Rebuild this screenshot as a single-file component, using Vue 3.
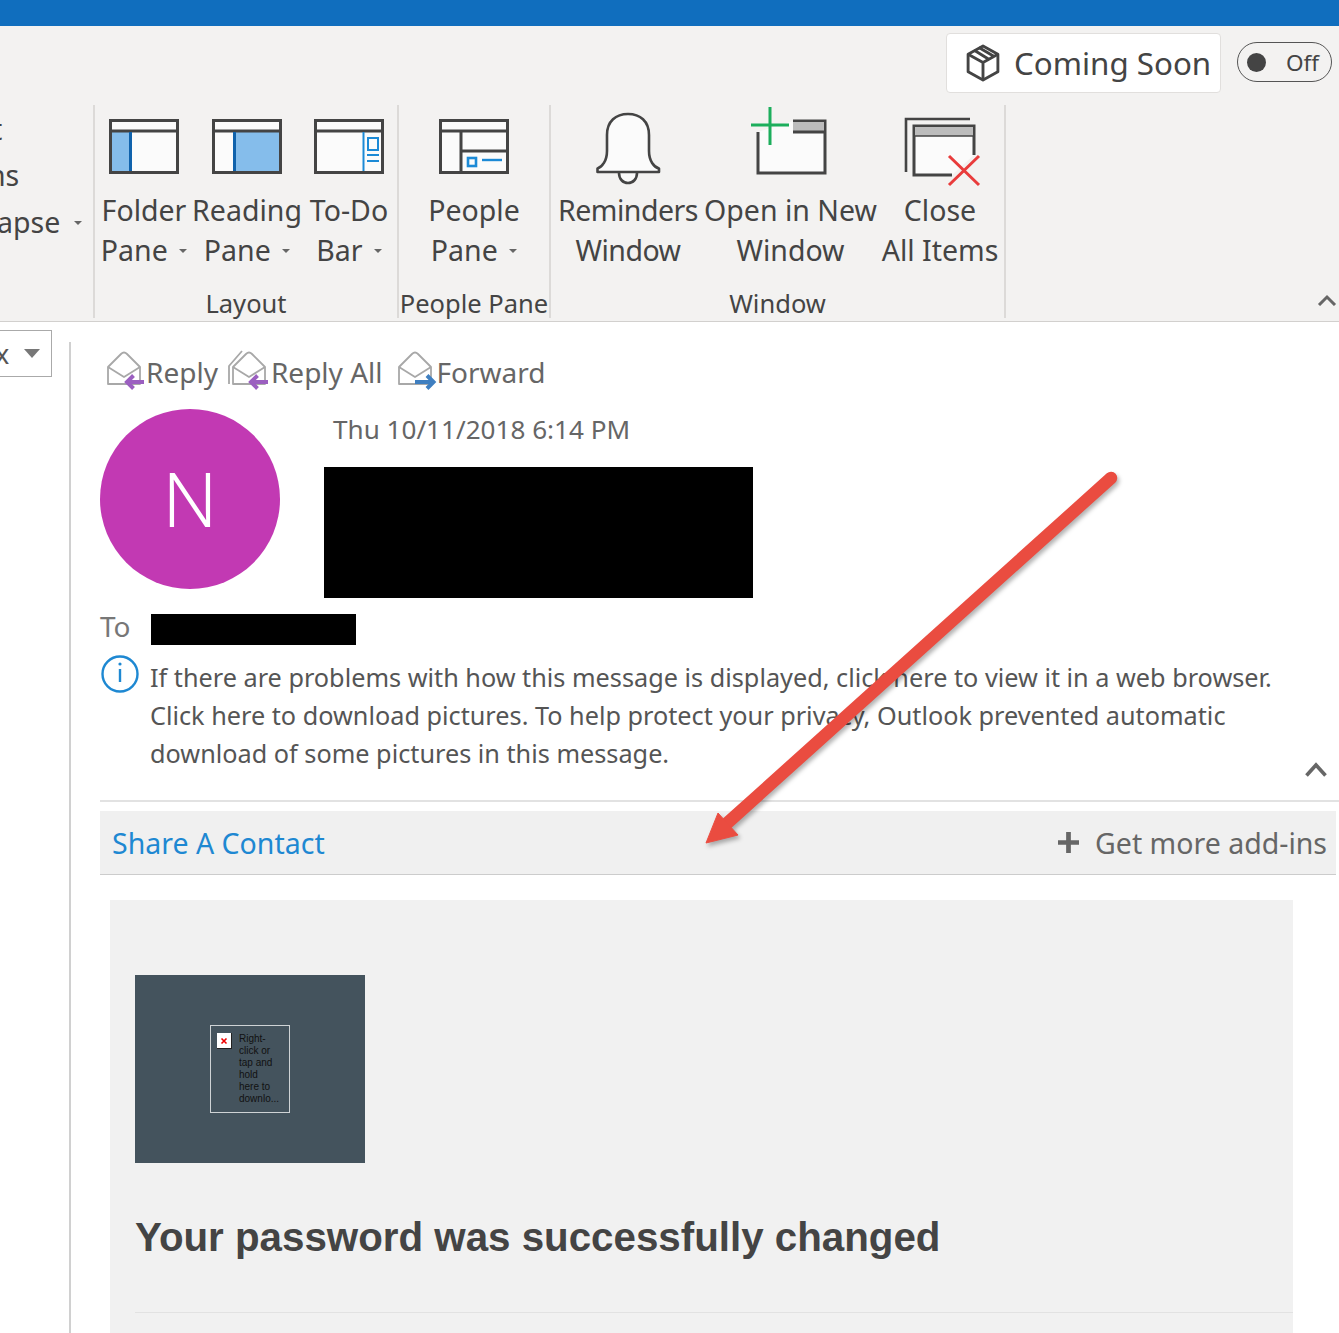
<script setup>
// Outlook reading view: ribbon on top, message below it.
const replyActions = [
  { label: 'Reply', arrow: '#9b5fc0', back: true, all: false },
  { label: 'Reply All', arrow: '#9b5fc0', back: true, all: true },
  { label: 'Forward', arrow: '#3f7fc0', back: false, all: false },
]
</script>

<template>
  <div class="app">
    <div class="titlebar"></div>

    <header class="ribbon">
      <div class="ribbon-top">
        <div class="coming-soon">
          <svg class="cube" viewBox="0 0 33 37" fill="none" stroke="#444" stroke-width="2.8" stroke-linejoin="round">
            <path d="M16.5 2 L31 10 V27 L16.5 35 L2 27 V10 Z" />
            <path d="M2 10 L16.5 18 L31 10 M16.5 18 V35 M8 6 L22.5 15 M12.5 3.5 L27 12" />
          </svg>
          <span>Coming Soon</span>
        </div>
        <div class="toggle"><i></i><span>Off</span></div>
      </div>

      <div class="groups">
        <div class="group stub">
          <div class="stub-line first">t</div>
          <div class="stub-line second">ns</div>
          <div class="stub-line third">apse <b class="caret stub-caret"></b></div>
        </div>

        <section class="group layout">
          <div class="buttons">
            <div class="rbtn folder-btn">
              <svg class="ico" viewBox="0 0 80 76">
                <rect x="6.5" y="15.5" width="67" height="52" fill="#fbfbfb" stroke="#444" stroke-width="3" />
                <rect x="8" y="27" width="17" height="39" fill="#85bdeb" />
                <path d="M5 26H75" stroke="#444" stroke-width="3" />
                <path d="M26.5 27V66" stroke="#0f62ac" stroke-width="3" />
              </svg>
              <div class="lbl">Folder<br />Pane <b class="caret"></b></div>
            </div>
            <div class="rbtn reading-btn">
              <svg class="ico" viewBox="0 0 80 76">
                <rect x="6.5" y="15.5" width="67" height="52" fill="#fbfbfb" stroke="#444" stroke-width="3" />
                <rect x="28" y="27" width="44" height="39" fill="#85bdeb" />
                <path d="M5 26H75" stroke="#444" stroke-width="3" />
                <path d="M27.5 27V66" stroke="#0f62ac" stroke-width="3" />
              </svg>
              <div class="lbl">Reading<br />Pane <b class="caret"></b></div>
            </div>
            <div class="rbtn todo-btn">
              <svg class="ico" viewBox="0 0 80 76">
                <rect x="6.5" y="15.5" width="67" height="52" fill="#fbfbfb" stroke="#444" stroke-width="3" />
                <path d="M5 26H75" stroke="#444" stroke-width="3" />
                <path d="M54.5 27V66" stroke="#1c8ad6" stroke-width="2" />
                <rect x="59" y="33" width="10" height="12" fill="none" stroke="#1c8ad6" stroke-width="2" />
                <path d="M58 50H70M58 56H70" stroke="#1c8ad6" stroke-width="2" />
              </svg>
              <div class="lbl">To-Do<br />Bar <b class="caret"></b></div>
            </div>
          </div>
          <div class="group-name">Layout</div>
        </section>

        <section class="group people">
          <div class="buttons">
            <div class="rbtn w102">
              <svg class="ico" viewBox="0 0 80 76">
                <rect x="6.5" y="15.5" width="67" height="52" fill="#fbfbfb" stroke="#444" stroke-width="3" />
                <path d="M5 26H75M27 26V68M27 46H75" stroke="#444" stroke-width="3" fill="none" />
                <rect x="34" y="53" width="8" height="8" fill="none" stroke="#1c8ad6" stroke-width="2.6" />
                <path d="M48 55H68" stroke="#1c8ad6" stroke-width="2.4" />
              </svg>
              <div class="lbl">People<br />Pane <b class="caret"></b></div>
            </div>
          </div>
          <div class="group-name">People Pane</div>
        </section>

        <section class="group window">
          <div class="buttons">
            <div class="rbtn w140">
              <svg class="ico" viewBox="0 0 80 76">
                <path d="M31 68C31 74 35 78 40 78C45 78 49 74 49 68" fill="#fbfbfb" stroke="#444" stroke-width="2.6" />
                <path d="M9.5 67V63.5C14 62 19 56 19 46V30C19 16 28 9 40 9C52 9 61 16 61 30V46C61 56 66 62 71 63.5V67Z" fill="#fbfbfb" stroke="#444" stroke-width="2.6" stroke-linejoin="round" />
              </svg>
              <div class="lbl reminders">Reminders<br />Window</div>
            </div>
            <div class="rbtn w175">
              <svg class="ico" viewBox="0 0 80 76">
                <path d="M7 27V68H74V16H42" fill="#fbfbfb" stroke="#444" stroke-width="3" />
                <rect x="42" y="17" width="31" height="10" fill="#bcbcbc" />
                <path d="M42 27H74" stroke="#444" stroke-width="3" />
                <path d="M0 20H38M19 2V40" stroke="#1cae5c" stroke-width="3" />
              </svg>
              <div class="lbl">Open in New<br />Window</div>
            </div>
            <div class="rbtn w114">
              <svg class="ico" viewBox="0 0 80 76">
                <path d="M6 67V14H70" fill="none" stroke="#444" stroke-width="2.6" />
                <path d="M52 70H14V21H74V50" fill="#fbfbfb" stroke="#444" stroke-width="3" />
                <rect x="15" y="22" width="58" height="9" fill="#bcbcbc" />
                <path d="M14 31H74" stroke="#444" stroke-width="1.5" />
                <path d="M49 51L79 80M79 51L49 80" stroke="#e93c3c" stroke-width="3" />
              </svg>
              <div class="lbl">Close<br />All Items</div>
            </div>
          </div>
          <div class="group-name">Window</div>
        </section>

        <svg class="collapse" viewBox="0 0 20 12" fill="none" stroke="#666" stroke-width="3">
          <path d="M2 11L10 3L18 11" />
        </svg>
      </div>
    </header>

    <div class="mail">
      <aside class="side">
        <div class="folder-box"><span>x</span><b class="box-caret"></b></div>
      </aside>

      <main class="reader">
        <div class="actions">
          <div v-for="a in replyActions" :key="a.label" class="action">
            <svg class="env" :class="{ wide: a.all }" :viewBox="a.all ? '0 0 42 44' : '0 0 38 44'" fill="none">
              <g :transform="a.all ? 'translate(4 0)' : ''" stroke="#a8a8a8" stroke-width="1.8" stroke-linejoin="round">
                <path v-if="a.all" d="M-3 34V16L10 1" />
                <path d="M1 34V17L14 4Q17 1 20 4L33 17V34Z" fill="#fff" />
                <path d="M1 17L17 27L33 17" />
              </g>
              <g v-if="a.back" :transform="a.all ? 'translate(3 0)' : ''" :stroke="a.arrow" stroke-width="4">
                <path d="M20 32H37M26.5 25.5L20 32L26.5 38.5" />
              </g>
              <g v-else :stroke="a.arrow" stroke-width="4">
                <path d="M17 32H35M29 25.5L35.5 32L29 38.5" />
              </g>
            </svg>
            <span>{{ a.label }}</span>
          </div>
        </div>

        <div class="head">
          <div class="avatar"><span>N</span></div>
          <div class="head-info">
            <div class="date">Thu 10/11/2018 6:14 PM</div>
            <div class="redact sender"></div>
          </div>
        </div>

        <div class="to-row">
          <span>To</span>
          <div class="redact recipient"></div>
        </div>

        <div class="notice">
          <svg class="info" viewBox="0 0 38 38" fill="none" stroke="#1e88d2" stroke-width="2.4">
            <circle cx="19" cy="19" r="17.5" />
            <path d="M19 14V27" stroke-width="2.4" />
            <circle cx="19" cy="9" r="1.6" fill="#1e88d2" stroke="none" />
          </svg>
          <p>
            If there are problems with how this message is displayed, click here to view it in a web browser.<br />
            Click here to download pictures. To help protect your privacy, Outlook prevented automatic<br />
            download of some pictures in this message.
          </p>
          <svg class="notice-chev" viewBox="0 0 22 15" fill="none" stroke="#666" stroke-width="3.6">
            <path d="M1.5 13.5L11 3L20.5 13.5" />
          </svg>
        </div>

        <div class="addins-wrap">
          <div class="addins">
            <a class="addin-link">Share A Contact</a>
            <div class="addin-more">
              <svg class="plus" viewBox="0 0 20 20"><path d="M10 0V20M0 10H20" stroke="#666" stroke-width="4.5" /></svg>
              <span>Get more add-ins</span>
            </div>
          </div>
        </div>

        <section class="card">
          <div class="hero">
            <div class="broken">
              <div class="broken-ico">
                <svg viewBox="0 0 8 8"><path d="M1.5 1.5L6.5 6.5M6.5 1.5L1.5 6.5" stroke="#e00" stroke-width="1.6" /></svg>
              </div>
              <div class="broken-text">Right-click or tap and hold here to downlo...</div>
            </div>
          </div>
          <h1>Your password was successfully changed</h1>
          <div class="card-rule"></div>
        </section>
      </main>
    </div>

    <svg class="arrow" viewBox="0 0 1339 1333">
      <g class="arrow-shape">
        <path d="M1111 478L724 826" stroke="#ea4c40" stroke-width="12.5" stroke-linecap="round" />
        <path d="M706 843L718 813L738 835Z" fill="#ea4c40" stroke="#ea4c40" stroke-width="1" stroke-linejoin="round" />
      </g>
    </svg>
  </div>
</template>

<style>
html,
body {
  margin: 0;
  background: #fff;
}
</style>

<style scoped>
.app {
  position: relative;
  width: 1339px;
  height: 1333px;
  overflow: hidden;
  background: #fff;
  font-family: "Noto Sans", "Open Sans", sans-serif;
  color: #444;
}
.titlebar {
  height: 26px;
  background: #106ebe;
}

/* ribbon */
.ribbon {
  height: 295px;
  background: #f3f2f1;
  border-bottom: 1px solid #d2d0ce;
}
.ribbon-top {
  height: 72px;
  padding: 7px 7px 0 0;
  display: flex;
  justify-content: flex-end;
  gap: 16px;
}
.coming-soon {
  height: 60px;
  width: 275px;
  box-sizing: border-box;
  background: #fff;
  border: 1px solid #e1dfdd;
  border-radius: 4px;
  display: flex;
  align-items: center;
  padding-left: 19px;
  gap: 14px;
  font-size: 31.3px;
  color: #444;
}
.cube {
  width: 34px;
  height: 38px;
  flex: none;
}
.toggle {
  margin-top: 9px;
  width: 95px;
  height: 40px;
  box-sizing: border-box;
  border: 1px solid #555;
  border-radius: 20px;
  display: flex;
  align-items: center;
  padding-left: 9px;
  font-size: 22.5px;
}
.toggle i {
  width: 19px;
  height: 19px;
  border-radius: 50%;
  background: #444;
}
.toggle span {
  margin-left: 20px;
}

.groups {
  display: flex;
  height: 213px;
  position: relative;
}
.group {
  border-right: 2px solid #dcdad8;
  display: flex;
  flex-direction: column;
  align-items: center;
  height: 213px;
  box-sizing: border-box;
}
.stub {
  width: 95px;
  align-items: flex-start;
  font-size: 28.5px;
  overflow: hidden;
}
.stub-line {
  height: 46px;
  line-height: 46px;
  white-space: nowrap;
}
.stub-line.first {
  margin-top: 1px;
  margin-left: -8px;
}
.stub-line.second {
  margin-left: -12px;
}
.stub-line.third {
  margin-left: -3px;
  margin-top: 1px;
}
.layout {
  width: 304px;
  align-items: stretch;
}
.people {
  width: 152px;
}
.window {
  width: 455px;
  align-items: stretch;
}
.buttons {
  display: flex;
  justify-content: center;
  flex: none;
  height: 180px;
}
.layout .buttons {
  justify-content: flex-start;
}
.window .buttons {
  justify-content: flex-start;
  padding-left: 7px;
  gap: 5px;
}
.rbtn {
  flex: none;
  display: flex;
  flex-direction: column;
  align-items: center;
}
.folder-btn {
  width: 98px;
}
.reading-btn {
  width: 108px;
}
.todo-btn {
  width: 96px;
}
.w102 {
  width: 102px;
}
.w140 {
  width: 140px;
}
.w175 {
  width: 175px;
}
.w114 {
  width: 114px;
}
.ico {
  width: 80px;
  height: 76px;
  flex: none;
  overflow: visible;
  margin-bottom: 9px;
}
.lbl {
  font-size: 28.5px;
  line-height: 40px;
  text-align: center;
  white-space: nowrap;
}
.reminders {
  letter-spacing: -0.5px;
}
.group-name {
  font-size: 25.5px;
  line-height: 36px;
  text-align: center;
  white-space: nowrap;
}
.caret {
  display: inline-block;
  width: 0;
  height: 0;
  border-left: 4px solid transparent;
  border-right: 4px solid transparent;
  border-top: 4px solid #666;
  vertical-align: 8px;
  margin-left: 4px;
}
.stub-caret {
  margin-left: 6px;
}
.collapse {
  position: absolute;
  right: 2px;
  bottom: 12px;
  width: 20px;
  height: 12px;
}

/* message */
.mail {
  display: flex;
}
.side {
  width: 70px;
  flex: none;
}
.folder-box {
  margin-top: 8px;
  width: 52px;
  height: 47px;
  box-sizing: border-box;
  border: 1px solid #aaa;
  border-left: none;
  display: flex;
  align-items: center;
  justify-content: space-between;
  padding-right: 11px;
  font-size: 27px;
  color: #555;
  overflow: hidden;
}
.folder-box span {
  margin-left: -5px;
}
.box-caret {
  width: 0;
  height: 0;
  border-left: 8px solid transparent;
  border-right: 8px solid transparent;
  border-top: 9px solid #777;
}
.reader {
  margin-top: 20px;
  margin-left: -1px;
  border-left: 2px solid #d0d0d0;
  padding-left: 29px;
  width: 1239px;
  flex: none;
}
.actions {
  height: 60px;
  padding-bottom: 2px;
  display: flex;
  align-items: center;
  font-size: 28px;
  color: #666;
  padding-left: 7px;
  gap: 10px;
}
.action {
  display: flex;
  align-items: center;
  gap: 1px;
}
.action:last-child {
  margin-left: 5px;
}
.env {
  width: 38px;
  height: 44px;
  overflow: visible;
}
.env.wide {
  width: 42px;
}
.head {
  margin-top: 5px;
  display: flex;
}
.avatar {
  width: 180px;
  height: 180px;
  border-radius: 50%;
  background: #c239b3;
  color: #fff;
  font-size: 76px;
  font-weight: 300;
  display: flex;
  align-items: center;
  justify-content: center;
  flex: none;
}
.avatar span {
  margin-top: -4px;
}
.head-info {
  margin-left: 44px;
}
.date {
  height: 41px;
  line-height: 41px;
  padding-left: 9px;
  font-size: 26.1px;
  color: #666;
  margin-bottom: 17px;
}
.redact {
  background: #000;
}
.sender {
  width: 429px;
  height: 131px;
}
.to-row {
  margin-top: 16px;
  display: flex;
  align-items: center;
  font-size: 28px;
  color: #777;
  height: 31px;
}
.to-row span {
  width: 51px;
  margin-top: -8px;
}
.recipient {
  width: 205px;
  height: 31px;
}
.notice {
  margin-top: 14px;
  height: 141px;
  display: flex;
}
.info {
  width: 38px;
  height: 38px;
  margin: -4px 11px 0 1px;
  flex: none;
}
.notice p {
  margin: -1px 0 0;
  width: 1150px;
  font-size: 25.25px;
  line-height: 38px;
  color: #555;
  white-space: nowrap;
  flex: none;
}
.notice-chev {
  width: 22px;
  height: 15px;
  flex: none;
  margin: 103px 0 0 5px;
}
.addins-wrap {
  border-top: 2px solid #e2e2e2;
  padding-top: 9px;
}
.addins {
  width: 1236px;
  height: 64px;
  box-sizing: border-box;
  background: #f0f0f0;
  border-bottom: 1px solid #ccc;
  padding: 0 9px 0 12px;
  display: flex;
  align-items: center;
  justify-content: space-between;
  font-size: 28.5px;
}
.addin-link {
  color: #1e88d2;
}
.addin-more {
  display: flex;
  align-items: center;
  gap: 16px;
  color: #666;
}
.plus {
  width: 21px;
  height: 21px;
}
.card {
  margin-top: 25px;
  margin-left: 10px;
  width: 1183px;
  height: 433px;
  background: #f1f1f1;
  padding: 75px 0 0 25px;
  box-sizing: border-box;
}
.hero {
  width: 230px;
  height: 188px;
  background: #44535d;
  display: flex;
  align-items: center;
  justify-content: center;
}
.broken {
  width: 80px;
  height: 88px;
  box-sizing: border-box;
  border: 1px solid #cfd3d5;
  display: flex;
  gap: 7px;
  padding: 7px 0 0 6px;
}
.broken-ico {
  width: 14px;
  height: 15px;
  flex: none;
  background: #fff;
  border-right: 1px solid #222;
  border-bottom: 1px solid #222;
  display: flex;
  align-items: center;
  justify-content: center;
}
.broken-ico svg {
  width: 8px;
  height: 8px;
}
.broken-text {
  font-family: "Liberation Sans", sans-serif;
  font-size: 10px;
  line-height: 12px;
  color: #111;
  width: 38px;
}
.card h1 {
  margin: 50px 0 0;
  font-family: "Liberation Sans", Arial, sans-serif;
  font-size: 40.3px;
  line-height: 50px;
  font-weight: 700;
  color: #444;
  white-space: nowrap;
}
.card-rule {
  margin-top: 49px;
  height: 1px;
  background: #e2e2e2;
}

/* annotation drawn over the screenshot */
.arrow {
  position: absolute;
  left: 0;
  top: 0;
  width: 1339px;
  height: 1333px;
  pointer-events: none;
}
.arrow-shape {
  filter: drop-shadow(2px 3px 2px rgba(0, 0, 0, 0.3));
}
</style>
